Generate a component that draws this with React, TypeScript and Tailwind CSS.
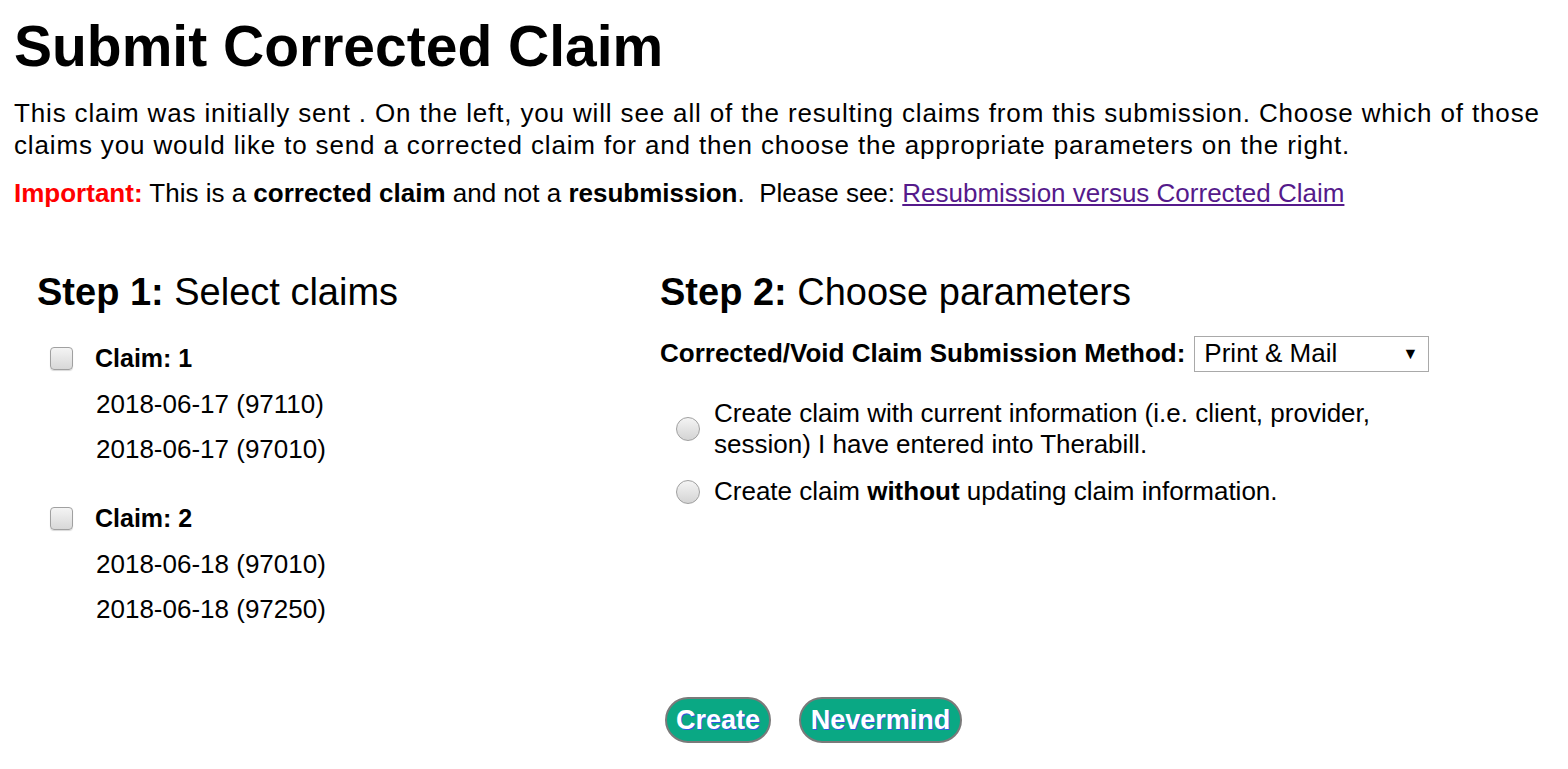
export default function App() {
  return (
    <div className="min-h-screen bg-white text-black" style={{ fontFamily: '"Liberation Sans", Arial, sans-serif' }}>
      <div className="px-[14px] pt-[10px]">
        <h1 className="text-[57px] font-bold leading-[72px]">Submit Corrected Claim</h1>
        <p className="mt-[15px] text-[26px] leading-[32px] tracking-[0.85px]">
          This claim was initially sent . On the left, you will see all of the resulting claims from this submission. Choose which of those
          <br />
          claims you would like to send a corrected claim for and then choose the appropriate parameters on the right.
        </p>
        <p className="mt-[16px] text-[26px] leading-[32px]">
          <span className="font-bold text-[#ff0000]">Important:</span> This is a <b>corrected claim</b> and not a <b>resubmission</b>.&nbsp; Please see:{" "}
          <a href="#" className="text-[#551a8b] underline">Resubmission versus Corrected Claim</a>
        </p>
      </div>

      <div className="mt-[61px] flex">
        {/* Step 1 */}
        <div className="w-[660px] pl-[37px]">
          <h2 className="text-[38px] leading-[44px]">
            <b>Step 1:</b> Select claims
          </h2>
          {[
            { n: 1, rows: ["2018-06-17 (97110)", "2018-06-17 (97010)"] },
            { n: 2, rows: ["2018-06-18 (97010)", "2018-06-18 (97250)"] },
          ].map((c, i) => (
            <div key={c.n} className={i === 0 ? "mt-[29px]" : "mt-[39px]"}>
              <label className="flex items-center gap-[22px] pl-[13px]">
                <span className="inline-block h-[23px] w-[23px] rounded-[4px] border border-[#a0a0a0] bg-gradient-to-b from-[#f4f4f4] to-[#d8d8d8] shadow-[0_1px_1px_rgba(0,0,0,0.15)]" />
                <span className="text-[25px] font-bold leading-[30px]">Claim: {c.n}</span>
              </label>
              <div className="pl-[59px]">
                {c.rows.map((r, j) => (
                  <div key={r} className={(j === 0 ? "mt-[16px]" : "mt-[15px]") + " text-[26px] leading-[30px]"}>{r}</div>
                ))}
              </div>
            </div>
          ))}
        </div>

        {/* Step 2 */}
        <div className="flex-1">
          <h2 className="text-[38px] leading-[44px]">
            <b>Step 2:</b> Choose parameters
          </h2>
          <div className="mt-[20px] flex items-center gap-[9px]">
            <span className="text-[26px] font-bold">Corrected/Void Claim Submission Method:</span>
            <div className="flex h-[36px] w-[235px] items-center justify-between border border-[#a9a9a9] pl-[9px] pr-[10px] text-[26px]">
              <span>Print &amp; Mail</span>
              <span className="text-[16px]">▼</span>
            </div>
          </div>
          <div className="mt-[25px] flex items-center gap-[14px] pl-[16px]">
            <span className="inline-block h-[24px] w-[24px] shrink-0 rounded-full border border-[#a0a0a0] bg-gradient-to-b from-[#f4f4f4] to-[#d4d4d4]" />
            <span className="text-[26px] leading-[31px]">
              Create claim with current information (i.e. client, provider,
              <br />
              session) I have entered into Therabill.
            </span>
          </div>
          <div className="mt-[16px] flex items-center gap-[14px] pl-[16px]">
            <span className="inline-block h-[24px] w-[24px] shrink-0 rounded-full border border-[#a0a0a0] bg-gradient-to-b from-[#f4f4f4] to-[#d4d4d4]" />
            <span className="text-[26px] leading-[31px]">
              Create claim <b>without</b> updating claim information.
            </span>
          </div>
        </div>
      </div>

      <div className="mt-[73px] flex justify-center gap-[28px] pl-[59px]">
        <button className="h-[46px] w-[106px] rounded-full border-2 border-[#7a7a7a] bg-[#0aa884] text-[27px] font-bold text-white [text-shadow:1px_1px_0_#2f55e8]">
          Create
        </button>
        <button className="h-[46px] w-[163px] rounded-full border-2 border-[#7a7a7a] bg-[#0aa884] text-[27px] font-bold text-white [text-shadow:1px_1px_0_#2f55e8]">
          Nevermind
        </button>
      </div>
    </div>
  )
}
